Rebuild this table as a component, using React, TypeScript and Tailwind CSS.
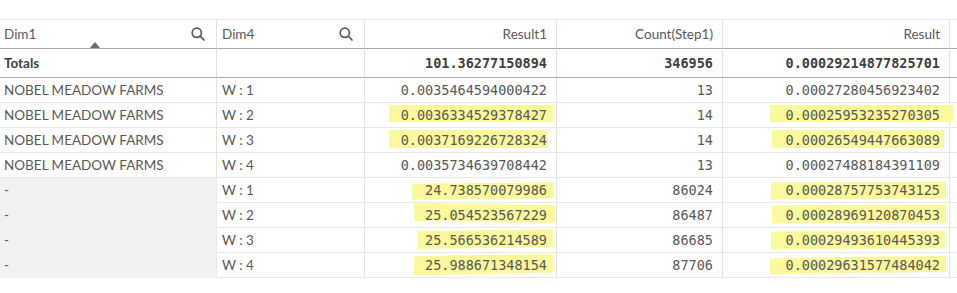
type Row = {
  d1: string;
  d4: string;
  r1: string;
  c: string;
  r: string;
  hl1?: string;
  hl2?: string;
};

const rows: Row[] = [
  { d1: 'NOBEL MEADOW FARMS', d4: 'W : 1', r1: '0.0035464594000422', c: '13', r: '0.00027280456923402' },
  {
    d1: 'NOBEL MEADOW FARMS', d4: 'W : 2', r1: '0.0036334529378427', c: '14', r: '0.00025953235270305',
    hl1: 'left-[24px] w-[164px] top-[2px] h-[17px]',
    hl2: 'left-[47px] w-[183px] top-[2px] h-[17px]',
  },
  {
    d1: 'NOBEL MEADOW FARMS', d4: 'W : 3', r1: '0.0037169226728324', c: '14', r: '0.00026549447663089',
    hl1: 'left-[24px] w-[159px] top-[2px] h-[18px]',
    hl2: 'left-[49px] w-[172px] top-[2px] h-[18px]',
  },
  { d1: 'NOBEL MEADOW FARMS', d4: 'W : 4', r1: '0.0035734639708442', c: '13', r: '0.00027488184391109' },
  {
    d1: '-', d4: 'W : 1', r1: '24.738570079986', c: '86024', r: '0.00028757753743125',
    hl1: 'left-[47px] w-[142px] top-[5px] h-[16px] -rotate-[0.6deg]',
    hl2: 'left-[48px] w-[175px] top-[4px] h-[17px] -rotate-[0.4deg]',
  },
  {
    d1: '-', d4: 'W : 2', r1: '25.054523567229', c: '86487', r: '0.00028969120870453',
    hl1: 'left-[49px] w-[141px] top-[1px] h-[18px] rotate-[0.8deg]',
    hl2: 'left-[49px] w-[174px] top-[2px] h-[18px] -rotate-[0.3deg]',
  },
  {
    d1: '-', d4: 'W : 3', r1: '25.566536214589', c: '86685', r: '0.00029493610445393',
    hl1: 'left-[53px] w-[135px] top-[2px] h-[18px] -rotate-[0.8deg]',
    hl2: 'left-[48px] w-[174px] top-[3px] h-[18px] -rotate-[0.4deg]',
  },
  {
    d1: '-', d4: 'W : 4', r1: '25.988671348154', c: '87706', r: '0.00029631577484042',
    hl1: 'left-[49px] w-[139px] top-[2px] h-[19px] -rotate-[1deg]',
    hl2: 'left-[47px] w-[176px] top-[4px] h-[16px] -rotate-[0.8deg]',
  },
];

function SearchIcon() {
  return (
    <svg width="14" height="14" viewBox="0 0 14 14" fill="none" stroke="#595959" strokeWidth="1.7">
      <circle cx="5.8" cy="5.8" r="4.6" />
      <line x1="9.2" y1="9.2" x2="13" y2="13" strokeLinecap="round" />
    </svg>
  );
}

function NumCell({ value, hl, bold }: { value: string; hl?: string; bold?: boolean }) {
  return (
    <div className="relative flex items-center justify-end pr-[9px] border-r border-[#e3e3e3]">
      {hl && <span className={`absolute bg-[#fcf89c] ${hl}`} />}
      <span className={`relative z-10 ${bold ? 'font-bold text-[#404040]' : ''}`}>{value}</span>
    </div>
  );
}

export default function App() {
  return (
    <div className="w-[957px] h-[293px] bg-white pt-[19px] text-[#595959] font-['Lato','Liberation_Sans',sans-serif] text-[13.5px] overflow-hidden">
      <div className="grid grid-cols-[217px_148px_192px_166px_227px_1fr] border-t border-[#e8e8e8]">
        {/* header */}
        <div className="relative h-[29px] flex items-center justify-between pl-[4px] pr-[11px] border-r border-b border-r-[#e3e3e3] border-b-[#ababab]">
          <span>Dim1</span>
          <SearchIcon />
          <span className="absolute left-[90px] bottom-0 w-0 h-0 border-l-[5px] border-r-[5px] border-b-[6px] border-l-transparent border-r-transparent border-b-[#6b6b6b]" />
        </div>
        <div className="h-[29px] flex items-center justify-between pl-[5px] pr-[11px] border-r border-b border-r-[#e3e3e3] border-b-[#ababab]">
          <span>Dim4</span>
          <SearchIcon />
        </div>
        <div className="h-[29px] flex items-center justify-end pr-[9px] border-r border-b border-r-[#e3e3e3] border-b-[#ababab]">
          Result1
        </div>
        <div className="h-[29px] flex items-center justify-end pr-[9px] border-r border-b border-r-[#e3e3e3] border-b-[#ababab]">
          Count(Step1)
        </div>
        <div className="h-[29px] flex items-center justify-end pr-[9px] border-r border-b border-r-[#e3e3e3] border-b-[#ababab]">
          Result
        </div>
        <div className="h-[29px] border-b border-b-[#ababab]" />

        {/* totals */}
        <div className="h-[29px] flex items-center pl-[4px] font-bold text-[#404040] border-r border-b border-r-[#e3e3e3] border-b-[#ababab]">
          Totals
        </div>
        <div className="h-[29px] border-r border-b border-r-[#e3e3e3] border-b-[#ababab]" />
        <div className="h-[29px] grid border-b border-b-[#ababab] font-['DejaVu_Sans_Mono',monospace] text-[13.5px]">
          <NumCell value="101.36277150894" bold />
        </div>
        <div className="h-[29px] grid border-b border-b-[#ababab] font-['DejaVu_Sans_Mono',monospace] text-[13.5px]">
          <NumCell value="346956" bold />
        </div>
        <div className="h-[29px] grid border-b border-b-[#ababab] font-['DejaVu_Sans_Mono',monospace] text-[13.5px]">
          <NumCell value="0.00029214877825701" bold />
        </div>
        <div className="h-[29px] border-b border-b-[#ababab]" />

        {/* data rows */}
        {rows.map((row, i) => {
          const nullRow = row.d1 === '-';
          return (
            <div key={i} className="contents">
              <div
                className={
                  nullRow
                    ? 'h-[25px] flex items-center pl-[4px] bg-[#f2f2f2] border-r border-b border-r-[#eaeaea] border-b-[#f2f2f2]'
                    : 'h-[25px] flex items-center pl-[4px] border-r border-b border-r-[#e3e3e3] border-b-[#e8e8e8]'
                }
              >
                {row.d1}
              </div>
              <div className="h-[25px] flex items-center pl-[5px] border-r border-b border-r-[#e3e3e3] border-b-[#e8e8e8]">
                {row.d4}
              </div>
              <div className="h-[25px] grid border-b border-b-[#e8e8e8] font-['DejaVu_Sans_Mono',monospace] text-[13.5px]">
                <NumCell value={row.r1} hl={row.hl1} />
              </div>
              <div className="h-[25px] grid border-b border-b-[#e8e8e8] font-['DejaVu_Sans_Mono',monospace] text-[13.5px]">
                <NumCell value={row.c} />
              </div>
              <div className="h-[25px] grid border-b border-b-[#e8e8e8] font-['DejaVu_Sans_Mono',monospace] text-[13.5px]">
                <NumCell value={row.r} hl={row.hl2} />
              </div>
              <div className="h-[25px] border-b border-b-[#e8e8e8]" />
            </div>
          );
        })}
      </div>
    </div>
  );
}
